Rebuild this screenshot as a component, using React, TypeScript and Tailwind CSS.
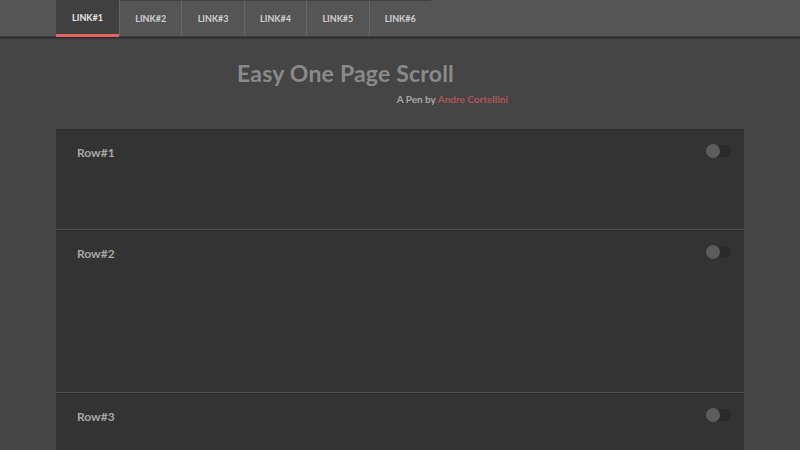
import React from "react";

const links = ["LINK#1", "LINK#2", "LINK#3", "LINK#4", "LINK#5", "LINK#6"];

const rows = [
  { label: "Row#1", height: "h-[101px]" },
  { label: "Row#2", height: "h-[163px]" },
  { label: "Row#3", height: "h-[200px]" },
];

const Toggle = () => (
  <div className="relative w-[25px] h-[12px] rounded-full bg-[#2a2a2a]">
    <div className="absolute left-0 top-[-1px] w-[14px] h-[14px] rounded-full bg-[#5c5c5c]" />
  </div>
);

export default function App() {
  return (
    <div
      className="w-[800px] h-[450px] overflow-hidden bg-[#454545]"
      style={{ fontFamily: "Lato, 'Open Sans', sans-serif" }}
    >
      <nav className="h-[37px] bg-[#555555] shadow-[0_1px_2px_rgba(0,0,0,0.5)] border-b border-[#3d3d3d] relative z-10">
        <ul className="flex pl-[56px] h-full">
          {links.map((link, i) => (
            <li
              key={link}
              className={
                i === 0
                  ? "relative w-[63px] h-full flex items-center justify-center bg-[#404040] text-[#e8e8e8] text-[9px] font-bold"
                  : "w-[62.4px] h-full flex items-center justify-center border-l border-[#666666] border-t border-t-[#3f3f3f] text-[#d0d0d0] text-[9px] font-bold"
              }
            >
              {link}
              {i === 0 && (
                <span className="absolute left-0 right-0 bottom-[-1px] h-[3px] bg-[#e46464]" />
              )}
            </li>
          ))}
        </ul>
      </nav>

      <header className="h-[92px] pl-[237px] pt-[22px]">
        <div className="inline-flex flex-col items-end">
          <h1 className="text-[23px] leading-[28px] font-bold text-[#8a8a8a] self-start tracking-[0.2px]">
            Easy One Page Scroll
          </h1>
          <p className="mt-[5px] text-[10px] font-bold text-[#a8a8a8] mr-[-54px]">
            A Pen by <span className="text-[#b05656]">Andre Cortellini</span>
          </p>
        </div>
      </header>

      <main className="mx-[56px]">
        {rows.map((row) => (
          <section
            key={row.label}
            className={`${row.height} bg-[#333333] border-t border-[#2c2c2c] border-b border-b-[#4e4e4e] flex justify-between px-[21px] pt-[16px]`}
          >
            <h2 className="text-[12px] leading-[14px] font-bold text-[#a8a8a8]">{row.label}</h2>
            <div className="mr-[-8px] mt-[-1px]">
              <Toggle />
            </div>
          </section>
        ))}
      </main>
    </div>
  );
}
